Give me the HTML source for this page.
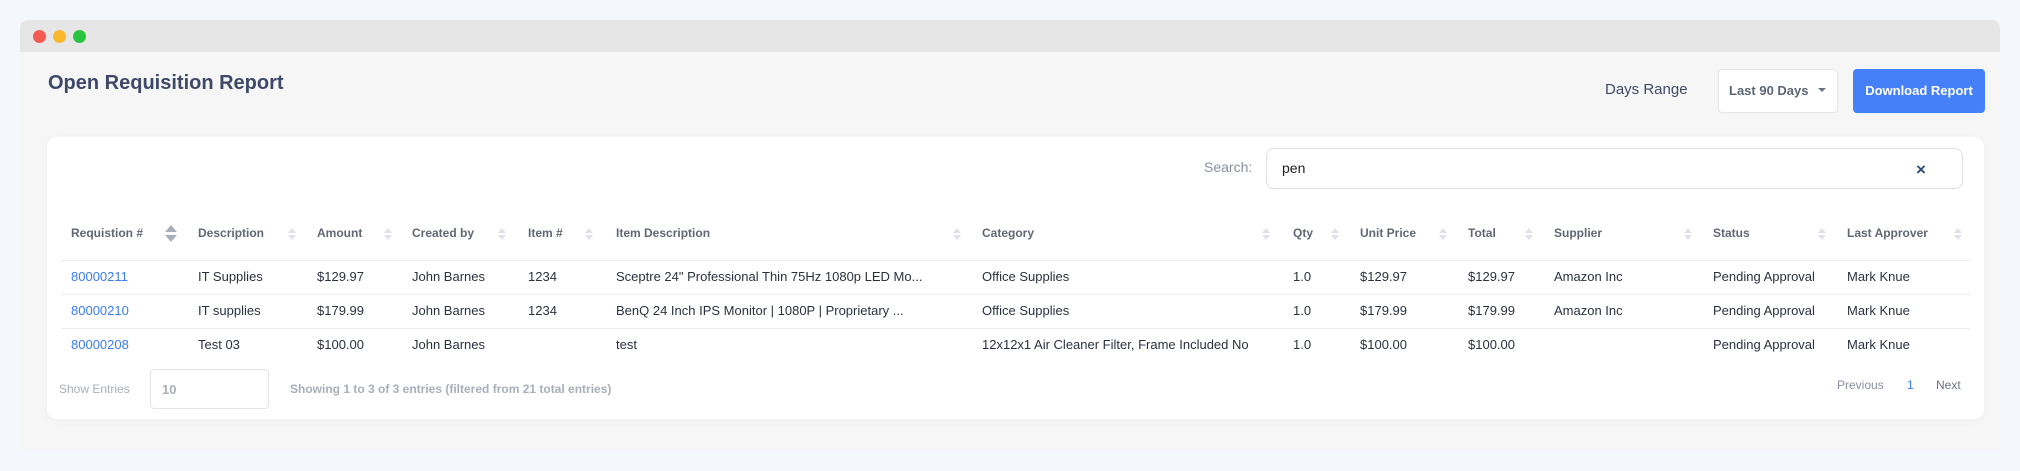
<!DOCTYPE html>
<html><head><meta charset="utf-8"><style>
*{margin:0;padding:0;box-sizing:border-box}
body{width:2020px;height:471px;background:#f4f7fb;font-family:"Liberation Sans",sans-serif;position:relative;overflow:hidden}
.a{position:absolute;white-space:nowrap}
.win{position:absolute;left:20px;top:20px;width:1980px;height:430px;background:#f6f6f6;border-radius:8px 8px 0 0}
.bar{position:absolute;left:0;top:0;width:1980px;height:32px;background:#e6e6e6;border-radius:8px 8px 0 0}
.dot{position:absolute;top:10px;width:13px;height:13px;border-radius:50%}
.card{position:absolute;left:47px;top:137px;width:1937px;height:282px;background:#fff;border-radius:10px;box-shadow:0 2px 10px rgba(0,0,0,0.03)}
.h{font-size:12px;font-weight:bold;color:#616775;top:226px}
.c{font-size:13px;color:#2b3140}
.l{color:#3b7cf0}
.line{position:absolute;height:1px;background:#ebedf0}
.s{position:absolute;top:228px;width:8px;height:14px}
.s:before{content:"";position:absolute;left:0;top:0;border-left:4px solid transparent;border-right:4px solid transparent;border-bottom:5px solid #dfe2e8}
.s:after{content:"";position:absolute;left:0;top:7px;border-left:4px solid transparent;border-right:4px solid transparent;border-top:5px solid #dfe2e8}
.s.big:before{border-left-width:6px;border-right-width:6px;border-bottom:7px solid #a9aebb;left:-2px;top:-3px}
.s.big:after{border-left-width:6px;border-right-width:6px;border-top:7px solid #a9aebb;left:-2px;top:7px}
</style></head><body>
<div class="win"><div class="bar">
<div class="dot" style="left:13px;background:#f25a52"></div>
<div class="dot" style="left:33px;background:#f9b82d"></div>
<div class="dot" style="left:53px;background:#28c33f"></div>
</div></div>
<div class="a" style="left:48px;top:72px;font-size:20px;font-weight:bold;color:#3e4868">Open Requisition Report</div>
<div class="a" style="left:1605px;top:81px;font-size:15px;color:#3e4868">Days Range</div>
<div class="a" style="left:1718px;top:69px;width:120px;height:44px;background:#fff;border:1px solid #e3e5ea;border-radius:4px;font-size:13px;font-weight:bold;color:#5c6478;padding:13px 0 0 10px">Last 90 Days <span style="display:inline-block;margin-left:6px;vertical-align:3px;border-left:4px solid transparent;border-right:4px solid transparent;border-top:4px solid #6b7280"></span></div>
<div class="a" style="left:1853px;top:69px;width:132px;height:44px;background:#4580f8;border-radius:4px;font-size:13px;font-weight:bold;color:#fff;text-align:center;line-height:44px">Download Report</div>
<div class="card"></div>
<div class="a" style="left:1204px;top:159px;font-size:14px;color:#8a90a0">Search:</div>
<div class="a" style="left:1266px;top:148px;width:697px;height:41px;border:1px solid #dcdfe5;border-radius:8px;font-size:14px;color:#222;padding:11px 0 0 15px">pen</div>
<div class="a" style="left:1916px;top:160px;font-size:17px;font-weight:bold;color:#2f4a7a">×</div>

<div class="a h" style="left:71px">Requistion #</div><div class="s big" style="left:167px"></div>
<div class="a h" style="left:198px">Description</div><div class="s" style="left:288px"></div>
<div class="a h" style="left:317px">Amount</div><div class="s" style="left:384px"></div>
<div class="a h" style="left:412px">Created by</div><div class="s" style="left:498px"></div>
<div class="a h" style="left:528px">Item #</div><div class="s" style="left:585px"></div>
<div class="a h" style="left:616px">Item Description</div><div class="s" style="left:953px"></div>
<div class="a h" style="left:982px">Category</div><div class="s" style="left:1262px"></div>
<div class="a h" style="left:1293px">Qty</div><div class="s" style="left:1331px"></div>
<div class="a h" style="left:1360px">Unit Price</div><div class="s" style="left:1439px"></div>
<div class="a h" style="left:1468px">Total</div><div class="s" style="left:1525px"></div>
<div class="a h" style="left:1554px">Supplier</div><div class="s" style="left:1684px"></div>
<div class="a h" style="left:1713px">Status</div><div class="s" style="left:1818px"></div>
<div class="a h" style="left:1847px">Last Approver</div><div class="s" style="left:1954px"></div>

<div class="line" style="left:61px;top:260px;width:1909px"></div>
<div class="line" style="left:61px;top:294px;width:1909px"></div>
<div class="line" style="left:61px;top:328px;width:1909px"></div>

<div class="a c l" style="left:71px;top:269px">80000211</div>
<div class="a c" style="left:198px;top:269px">IT Supplies</div>
<div class="a c" style="left:317px;top:269px">$129.97</div>
<div class="a c" style="left:412px;top:269px">John Barnes</div>
<div class="a c" style="left:528px;top:269px">1234</div>
<div class="a c" style="left:616px;top:269px">Sceptre 24" Professional Thin 75Hz 1080p LED Mo...</div>
<div class="a c" style="left:982px;top:269px">Office Supplies</div>
<div class="a c" style="left:1293px;top:269px">1.0</div>
<div class="a c" style="left:1360px;top:269px">$129.97</div>
<div class="a c" style="left:1468px;top:269px">$129.97</div>
<div class="a c" style="left:1554px;top:269px">Amazon Inc</div>
<div class="a c" style="left:1713px;top:269px">Pending Approval</div>
<div class="a c" style="left:1847px;top:269px">Mark Knue</div>

<div class="a c l" style="left:71px;top:303px">80000210</div>
<div class="a c" style="left:198px;top:303px">IT supplies</div>
<div class="a c" style="left:317px;top:303px">$179.99</div>
<div class="a c" style="left:412px;top:303px">John Barnes</div>
<div class="a c" style="left:528px;top:303px">1234</div>
<div class="a c" style="left:616px;top:303px">BenQ 24 Inch IPS Monitor | 1080P | Proprietary ...</div>
<div class="a c" style="left:982px;top:303px">Office Supplies</div>
<div class="a c" style="left:1293px;top:303px">1.0</div>
<div class="a c" style="left:1360px;top:303px">$179.99</div>
<div class="a c" style="left:1468px;top:303px">$179.99</div>
<div class="a c" style="left:1554px;top:303px">Amazon Inc</div>
<div class="a c" style="left:1713px;top:303px">Pending Approval</div>
<div class="a c" style="left:1847px;top:303px">Mark Knue</div>

<div class="a c l" style="left:71px;top:337px">80000208</div>
<div class="a c" style="left:198px;top:337px">Test 03</div>
<div class="a c" style="left:317px;top:337px">$100.00</div>
<div class="a c" style="left:412px;top:337px">John Barnes</div>
<div class="a c" style="left:616px;top:337px">test</div>
<div class="a c" style="left:982px;top:337px">12x12x1 Air Cleaner Filter, Frame Included No</div>
<div class="a c" style="left:1293px;top:337px">1.0</div>
<div class="a c" style="left:1360px;top:337px">$100.00</div>
<div class="a c" style="left:1468px;top:337px">$100.00</div>
<div class="a c" style="left:1713px;top:337px">Pending Approval</div>
<div class="a c" style="left:1847px;top:337px">Mark Knue</div>

<div class="a" style="left:59px;top:382px;font-size:12px;color:#a9aebb">Show Entries</div>
<div class="a" style="left:150px;top:369px;width:119px;height:40px;border:1px solid #e3e5ea;border-radius:4px;font-size:13px;font-weight:bold;color:#a9aebb;padding:12px 0 0 11px">10</div>
<div class="a" style="left:290px;top:382px;font-size:12px;font-weight:bold;color:#a9aebb">Showing 1 to 3 of 3 entries (filtered from 21 total entries)</div>
<div class="a" style="left:1837px;top:378px;font-size:12px;color:#8a90a0">Previous</div>
<div class="a" style="left:1907px;top:378px;font-size:12px;color:#3b7cf0">1</div>
<div class="a" style="left:1936px;top:378px;font-size:12px;color:#6b7280">Next</div>
</body></html>
